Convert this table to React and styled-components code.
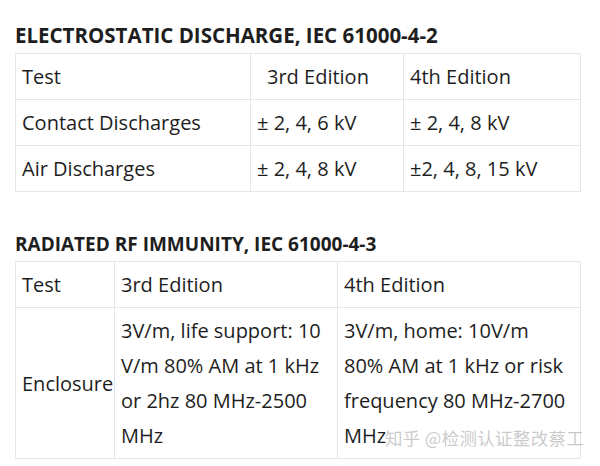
import styled, { createGlobalStyle } from "styled-components";

const GlobalStyle = createGlobalStyle`
  html, body {
    margin: 0;
    padding: 0;
    background: #ffffff;
  }
  body {
    font-family: "Open Sans", "Noto Sans", "Noto Sans CJK SC", sans-serif;
    color: #1e1e1e;
  }
`;

const Page = styled.div`
  position: relative;
  width: 600px;
  height: 466px;
  padding: 23px 0 0 15px;
  box-sizing: border-box;
  overflow: hidden;
`;

const Title = styled.h3`
  margin: ${(p) => (p.$first ? "0" : "40px")} 0 ${(p) => p.$gap}px 0;
  font-size: ${(p) => p.$size}px;
  line-height: 25px;
  font-weight: 700;
  color: #1e1e1e;
`;

const Table = styled.table`
  border-collapse: collapse;
  width: 565px;
  table-layout: fixed;
`;

const Cell = styled.td`
  border: 1px solid #e2e7ee;
  padding: 5px 6px;
  padding-left: ${(p) => (p.$indent ? "16px" : "6px")};
  font-size: 20px;
  line-height: 35px;
  vertical-align: middle;
  color: #1e1e1e;
  white-space: nowrap;
`;

const Watermark = styled.span`
  position: absolute;
  left: 385px;
  top: 425px;
  font-family: "Noto Sans CJK SC", sans-serif;
  font-size: 17.5px;
  line-height: 26px;
  color: rgba(150, 150, 150, 0.5);
  letter-spacing: 0.3px;
`;

export default function App() {
  return (
    <>
      <GlobalStyle />
      <Page>
        <Title $first $size={20.5} $gap={5}>
          ELECTROSTATIC DISCHARGE, IEC 61000-4-2
        </Title>
        <Table>
          <colgroup>
            <col style={{ width: 235 }} />
            <col style={{ width: 153 }} />
            <col style={{ width: 177 }} />
          </colgroup>
          <tbody>
            <tr>
              <Cell>Test</Cell>
              <Cell $indent>3rd Edition</Cell>
              <Cell>4th Edition</Cell>
            </tr>
            <tr>
              <Cell>Contact Discharges</Cell>
              <Cell>± 2, 4, 6 kV</Cell>
              <Cell>± 2, 4, 8 kV</Cell>
            </tr>
            <tr>
              <Cell>Air Discharges</Cell>
              <Cell>± 2, 4, 8 kV</Cell>
              <Cell>±2, 4, 8, 15 kV</Cell>
            </tr>
          </tbody>
        </Table>

        <Title $size={19} $gap={4}>
          RADIATED RF IMMUNITY, IEC 61000-4-3
        </Title>
        <Table>
          <colgroup>
            <col style={{ width: 99 }} />
            <col style={{ width: 223 }} />
            <col style={{ width: 243 }} />
          </colgroup>
          <tbody>
            <tr>
              <Cell>Test</Cell>
              <Cell>3rd Edition</Cell>
              <Cell>4th Edition</Cell>
            </tr>
            <tr>
              <Cell>Enclosure</Cell>
              <Cell>
                3V/m, life support: 10
                <br />
                V/m 80% AM at 1 kHz
                <br />
                or 2hz 80 MHz-2500
                <br />
                MHz
              </Cell>
              <Cell>
                3V/m, home: 10V/m
                <br />
                80% AM at 1 kHz or risk
                <br />
                frequency 80 MHz-2700
                <br />
                MHz
              </Cell>
            </tr>
          </tbody>
        </Table>
        <Watermark>知乎 @检测认证整改蔡工</Watermark>
      </Page>
    </>
  );
}
